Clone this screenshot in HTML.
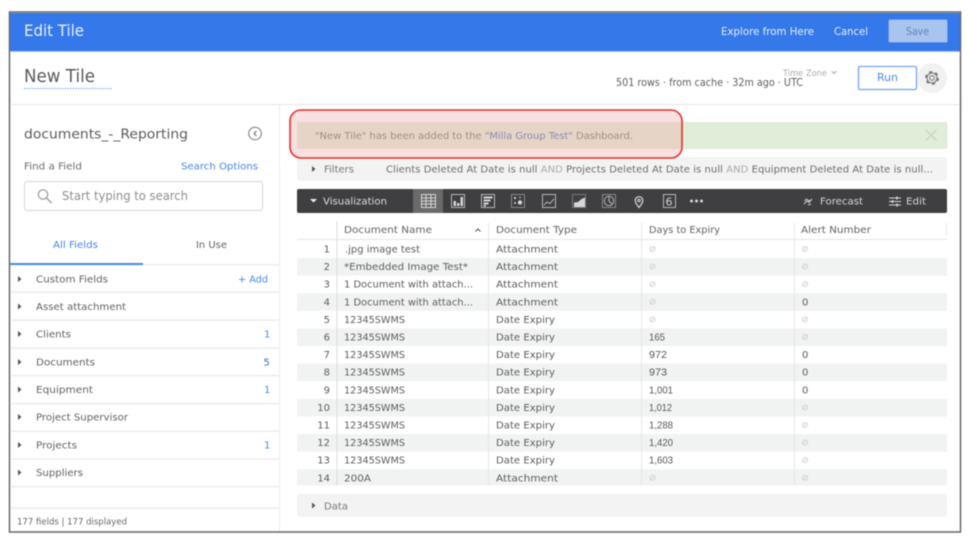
<!DOCTYPE html>
<html><head><meta charset="utf-8"><title>Edit Tile</title>
<style>
html,body{margin:0;padding:0;background:#fff;width:970px;height:542px;overflow:hidden}
svg{display:block;filter:blur(.42px)}
text{font-family:"DejaVu Sans","Liberation Sans",sans-serif;font-size:10px;fill:#5c5c5c}
.c{fill:#626262}
.b{fill:#4a86e8}
.d{font-family:"Liberation Sans","DejaVu Sans",sans-serif;font-size:10.5px;fill:#555}
</style></head><body>
<svg width="970" height="542" viewBox="0 0 970 542" xmlns="http://www.w3.org/2000/svg">
<defs>
<g id="n"><circle cx="0" cy="0" r="2.6" fill="none" stroke="#c8c8c8" stroke-width=".7"/><path d="M-2 2L2-2" stroke="#c8c8c8" stroke-width=".7"/></g>
<path id="t" d="M0-3L3.500 0L0 3Z" fill="#555"/>
</defs>
<rect width="970" height="542" fill="#fff"/>
<rect x="9.500" y="12" width="951" height="520" fill="#fff" stroke="#666" stroke-width="1.5"/>
<!-- header -->
<rect x="10" y="13" width="950" height="38" fill="#3478ea"/>
<rect x="10" y="51" width="950" height="1" fill="#a9c6f3"/>
<text x="24" y="36" style="font-size:16px;fill:#e6effd" textLength="60" lengthAdjust="spacingAndGlyphs">Edit Tile</text>
<text x="721" y="35" style="font-size:10.5px;fill:#e6effd" textLength="93" lengthAdjust="spacingAndGlyphs">Explore from Here</text>
<text x="834" y="35" style="font-size:10.5px;fill:#e6effd" textLength="34" lengthAdjust="spacingAndGlyphs">Cancel</text>
<rect x="889" y="20" width="58" height="22" rx="1" fill="#aac4f0" stroke="#9ab8ec"/>
<text x="906" y="35" style="font-size:10.5px;fill:#5f81ba" textLength="23" lengthAdjust="spacingAndGlyphs">Save</text>
<!-- sub header -->
<text x="24" y="82" style="font-size:18px;fill:#5a5a5a" textLength="71" lengthAdjust="spacingAndGlyphs">New Tile</text>
<path d="M24 88.500H113" stroke="#6fa0ee" stroke-width="1" stroke-dasharray="1.5 1.2"/>
<text x="616" y="86" style="font-size:11px;fill:#5f5f5f" textLength="187" lengthAdjust="spacingAndGlyphs">501 rows · from cache · 32m ago · UTC</text>
<text x="783" y="76" style="font-size:9px;fill:#aaa" textLength="44" lengthAdjust="spacingAndGlyphs">Time Zone</text>
<path d="M831.500 71l2.500 2.500 2.500-2.500" fill="none" stroke="#aaa" stroke-width="1"/>
<rect x="858.500" y="66.500" width="58" height="23" rx="1.5" fill="#fff" stroke="#74a3f0" stroke-width="1.3"/>
<text x="877" y="81" class="b" style="font-size:11px" textLength="21" lengthAdjust="spacingAndGlyphs">Run</text>
<circle cx="932" cy="78" r="15" fill="#f1f1f1"/>
<g fill="none" stroke="#777"><circle cx="932" cy="78" r="2.300" stroke-width="1.100"/><circle cx="932" cy="78" r="5" stroke-width="1.100"/><circle cx="932" cy="78" r="6" stroke-width="1.900" stroke-dasharray="3.140 3.140"/></g>
<rect x="10" y="104" width="950" height="1" fill="#e6e6e6"/>
<rect x="279" y="105" width="1" height="426" fill="#ececec"/>
<!-- sidebar -->
<text x="24" y="138.500" style="font-size:13.5px;fill:#5a5a5a" textLength="164" lengthAdjust="spacingAndGlyphs">documents_-_Reporting</text>
<circle cx="255" cy="133.500" r="6.300" fill="none" stroke="#777" stroke-width="1"/>
<path d="M256.500 131l-2.500 2.500 2.500 2.500" fill="none" stroke="#666" stroke-width="1"/>
<text x="24" y="169.500" style="font-size:10px;fill:#6c6c6c" textLength="58" lengthAdjust="spacingAndGlyphs">Find a Field</text>
<text x="181" y="169.500" class="b" textLength="77" lengthAdjust="spacingAndGlyphs">Search Options</text>
<rect x="24.500" y="181.500" width="238" height="29" rx="2.500" fill="#fff" stroke="#d4d4d4"/>
<circle cx="43" cy="194.500" r="4.700" fill="none" stroke="#999" stroke-width="1.2"/><path d="M46.500 198l5 5" stroke="#999" stroke-width="1.3"/>
<text x="62" y="200" style="font-size:12px;fill:#8e8e8e" textLength="126" lengthAdjust="spacingAndGlyphs">Start typing to search</text>
<text x="53" y="248" class="b" textLength="45" lengthAdjust="spacingAndGlyphs">All Fields</text>
<text x="196" y="248" class="c" textLength="31" lengthAdjust="spacingAndGlyphs">In Use</text>
<rect x="10" y="264" width="269" height="1.500" fill="#eee"/>
<rect x="10" y="263" width="133" height="2" fill="#4a86e8"/>
<g fill="#e9e9e9">
<rect x="10" y="291.500" width="269" height="1.200"/><rect x="10" y="319.500" width="269" height="1.200"/><rect x="10" y="347.500" width="269" height="1.200"/><rect x="10" y="375" width="269" height="1.200"/><rect x="10" y="403" width="269" height="1.200"/><rect x="10" y="430.500" width="269" height="1.200"/><rect x="10" y="458.500" width="269" height="1.200"/><rect x="10" y="486" width="269" height="1.200"/><rect x="10" y="507.500" width="269" height="1.200"/>
</g>
<use href="#t" x="18" y="279"/><use href="#t" x="18" y="306.500"/><use href="#t" x="18" y="334"/><use href="#t" x="18" y="362"/><use href="#t" x="18" y="389.500"/><use href="#t" x="18" y="417"/><use href="#t" x="18" y="445"/><use href="#t" x="18" y="472.500"/>
<text x="36" y="282.500" class="c" textLength="72" lengthAdjust="spacingAndGlyphs">Custom Fields</text>
<text x="36" y="310" class="c" textLength="90" lengthAdjust="spacingAndGlyphs">Asset attachment</text>
<text x="36" y="337.500" class="c" textLength="35" lengthAdjust="spacingAndGlyphs">Clients</text>
<text x="36" y="365.500" class="c" textLength="59" lengthAdjust="spacingAndGlyphs">Documents</text>
<text x="36" y="393" class="c" textLength="57" lengthAdjust="spacingAndGlyphs">Equipment</text>
<text x="36" y="420.500" class="c" textLength="92" lengthAdjust="spacingAndGlyphs">Project Supervisor</text>
<text x="36" y="448.500" class="c" textLength="41" lengthAdjust="spacingAndGlyphs">Projects</text>
<text x="36" y="476" class="c" textLength="47" lengthAdjust="spacingAndGlyphs">Suppliers</text>
<text x="238" y="282.500" class="b" textLength="30" lengthAdjust="spacingAndGlyphs">+ Add</text>
<text x="264" y="337.500" class="b">1</text>
<text x="263.500" y="365.500" class="b" style="fill:#3f6fc4">5</text>
<text x="264" y="393" class="b">1</text>
<text x="264" y="448.500" class="b">1</text>
<text x="17" y="524.500" style="font-size:9px;fill:#666" textLength="110" lengthAdjust="spacingAndGlyphs">177 fields | 177 displayed</text>
<!-- banner + filters -->
<rect x="297" y="122" width="650.500" height="27" rx="2" fill="#e0edd9"/>
<path d="M926 130l10.500 10.500M936.500 130L926 140.500" stroke="#c4cfbe" stroke-width="1.1"/>
<rect x="297" y="157" width="650" height="24" rx="3" fill="#f3f3f3"/>
<use href="#t" x="312" y="169"/>
<text x="324" y="172.500" style="fill:#777" textLength="30" lengthAdjust="spacingAndGlyphs">Filters</text>
<text x="386" y="172.500" style="fill:#6c6c6c" textLength="547" lengthAdjust="spacing">Clients Deleted At Date is null <tspan fill="#aaa">AND</tspan> Projects Deleted At Date is null <tspan fill="#aaa">AND</tspan> Equipment Deleted At Date is null...</text>
<!-- highlight -->
<rect x="290" y="110" width="392" height="48" rx="11" fill="#fadfe0"/>
<rect x="297" y="122" width="385" height="27" fill="#e6d5c6"/>
<text x="315" y="139" style="fill:#a18e82" textLength="318" lengthAdjust="spacing">"New Tile" has been added to the <tspan fill="#8a8bb0">"Milla Group Test"</tspan> Dashboard.</text>
<rect x="290" y="110" width="392" height="48" rx="11" fill="none" stroke="#e8302a" stroke-width="1.6"/>
<!-- viz bar -->
<rect x="297" y="189" width="650" height="24" rx="2" fill="#3f3f41"/>
<path d="M310 199h7l-3.500 3.500z" fill="#eee"/>
<text x="323" y="204.500" style="fill:#ddd" textLength="64" lengthAdjust="spacingAndGlyphs">Visualization</text>
<rect x="413" y="189" width="30" height="24" fill="#6a6a6a"/>
<g fill="none" stroke="#b5b5b5" stroke-width="1">
<path d="M421.500 194.500h14v13h-14zM421.500 198h14M421.500 201h14M421.500 204h14M426 194.500v13M431 194.500v13" stroke="#d4d4d4"/>
<rect x="451.500" y="194.500" width="13" height="13"/>
<rect x="481.500" y="194.500" width="13" height="13"/>
<rect x="511.500" y="194.500" width="13" height="13" stroke="#888"/>
<rect x="542.500" y="194.500" width="13" height="13"/>
<rect x="572.500" y="194.500" width="13" height="13" stroke="#777"/>
<rect x="602.500" y="194.500" width="13" height="13" stroke="#888"/>
<rect x="663.500" y="194.500" width="12" height="13"/>
<path d="M544 205l3-3 3 1.500 4-4.500"/>
<circle cx="609" cy="201" r="4.700"/><path d="M609 196.500v4.500l3 3"/>
<path d="M639 207.500c-2.500-3-3.800-5-3.800-7a3.800 3.800 0 0 1 7.600 0c0 2-1.300 4-3.800 7z" stroke="#ddd" stroke-width="1.200"/><circle cx="639" cy="200.500" r="1.200" stroke="#ddd"/>
</g>
<g fill="#d6d6d6">
<rect x="453.500" y="201" width="2.500" height="5"/><rect x="457" y="203" width="2.500" height="3"/><rect x="460.500" y="197" width="2.500" height="9"/>
<rect x="483.500" y="196.500" width="9" height="2"/><rect x="483.500" y="199.500" width="7" height="2"/><rect x="483.500" y="202.500" width="5" height="2"/><rect x="483.500" y="205" width="2.500" height="1.500"/>
<circle cx="515" cy="198" r="1.100"/><circle cx="515" cy="203" r="1"/><circle cx="520" cy="202.500" r="2.200"/><circle cx="520" cy="197.500" r=".8"/>
<path d="M574 207v-4.500l4-.5 3.500-3 3.500-1.500v9.500z"/>
<circle cx="691.500" cy="201" r="1.500"/><circle cx="696.500" cy="201" r="1.500"/><circle cx="701.500" cy="201" r="1.500"/>
</g>
<text x="665.500" y="205.500" style="font-size:11px;fill:#d8d8d8">6</text>
<path d="M804 204l3-3 2 1.500 3-3.500M804.500 201l2-2 2.500 2 2-1M808 205l3-1" fill="none" stroke="#cfcfcf" stroke-width="1"/>
<text x="820" y="204.500" style="fill:#d6d6d6" textLength="43" lengthAdjust="spacingAndGlyphs">Forecast</text>
<path d="M889 198h12M889 201.500h12M889 205h12" stroke="#d4d4d4" stroke-width="1.100"/>
<path d="M897 196.500v3M892.500 200v3M897 203.500v3" stroke="#d4d4d4" stroke-width="1.500"/>
<text x="906" y="204.500" style="fill:#d6d6d6" textLength="20" lengthAdjust="spacingAndGlyphs">Edit</text>
<!-- table header -->
<text x="344" y="233" class="c" textLength="88" lengthAdjust="spacingAndGlyphs">Document Name</text>
<path d="M475.500 231.500l2.500-2.500 2.500 2.500" fill="none" stroke="#555" stroke-width="1"/>
<text x="496" y="233" class="c" textLength="81" lengthAdjust="spacingAndGlyphs">Document Type</text>
<text x="649" y="233" class="c" textLength="71" lengthAdjust="spacingAndGlyphs">Days to Expiry</text>
<text x="801" y="233" class="c" textLength="70" lengthAdjust="spacingAndGlyphs">Alert Number</text>
<!-- stripes -->
<g fill="#f1f3f2">
<rect x="297" y="258" width="650" height="17.600"/><rect x="297" y="293.200" width="650" height="17.600"/><rect x="297" y="328.400" width="650" height="17.600"/><rect x="297" y="363.600" width="650" height="17.600"/><rect x="297" y="398.800" width="650" height="17.600"/><rect x="297" y="434" width="650" height="17.600"/><rect x="297" y="469.200" width="650" height="16.300"/>
</g>
<rect x="297" y="239" width="650" height="1" fill="#e3e3e3"/>
<g fill="#e6e6e6">
<rect x="336.500" y="221" width="1" height="264.500" fill="#dcdcdc"/>
<rect x="488" y="223" width="1" height="262.500"/>
<rect x="641" y="223" width="1" height="262.500"/>
<rect x="794" y="223" width="1" height="262.500"/>
<rect x="946" y="223" width="1" height="12"/>
</g>
<!-- row numbers -->
<g>
<text x="330" y="252.500" text-anchor="end">1</text><text x="330" y="270.100" text-anchor="end">2</text><text x="330" y="287.700" text-anchor="end">3</text><text x="330" y="305.300" text-anchor="end">4</text><text x="330" y="322.900" text-anchor="end">5</text><text x="330" y="340.500" text-anchor="end">6</text><text x="330" y="358.100" text-anchor="end">7</text><text x="330" y="375.700" text-anchor="end">8</text><text x="330" y="393.300" text-anchor="end">9</text><text x="330" y="410.900" text-anchor="end">10</text><text x="330" y="428.500" text-anchor="end">11</text><text x="330" y="446.100" text-anchor="end">12</text><text x="330" y="463.700" text-anchor="end">13</text><text x="330" y="481.300" text-anchor="end">14</text>
</g>
<!-- col 1 -->
<text x="345" y="252.500" textLength="75" lengthAdjust="spacingAndGlyphs">.jpg image test</text>
<text x="344" y="270.100" textLength="124" lengthAdjust="spacingAndGlyphs">*Embedded Image Test*</text>
<text x="344" y="287.700" textLength="129" lengthAdjust="spacingAndGlyphs">1 Document with attach...</text>
<text x="344" y="305.300" textLength="129" lengthAdjust="spacingAndGlyphs">1 Document with attach...</text>
<text x="344" y="322.900" textLength="61" lengthAdjust="spacingAndGlyphs">12345SWMS</text>
<text x="344" y="340.500" textLength="61" lengthAdjust="spacingAndGlyphs">12345SWMS</text>
<text x="344" y="358.100" textLength="61" lengthAdjust="spacingAndGlyphs">12345SWMS</text>
<text x="344" y="375.700" textLength="61" lengthAdjust="spacingAndGlyphs">12345SWMS</text>
<text x="344" y="393.300" textLength="61" lengthAdjust="spacingAndGlyphs">12345SWMS</text>
<text x="344" y="410.900" textLength="61" lengthAdjust="spacingAndGlyphs">12345SWMS</text>
<text x="344" y="428.500" textLength="61" lengthAdjust="spacingAndGlyphs">12345SWMS</text>
<text x="344" y="446.100" textLength="61" lengthAdjust="spacingAndGlyphs">12345SWMS</text>
<text x="344" y="463.700" textLength="61" lengthAdjust="spacingAndGlyphs">12345SWMS</text>
<text x="344" y="481.300" textLength="27" lengthAdjust="spacingAndGlyphs">200A</text>
<!-- col 2 -->
<text x="496" y="252.500" textLength="62" lengthAdjust="spacingAndGlyphs">Attachment</text>
<text x="496" y="270.100" textLength="62" lengthAdjust="spacingAndGlyphs">Attachment</text>
<text x="496" y="287.700" textLength="62" lengthAdjust="spacingAndGlyphs">Attachment</text>
<text x="496" y="305.300" textLength="62" lengthAdjust="spacingAndGlyphs">Attachment</text>
<text x="496" y="322.900" textLength="59" lengthAdjust="spacingAndGlyphs">Date Expiry</text>
<text x="496" y="340.500" textLength="59" lengthAdjust="spacingAndGlyphs">Date Expiry</text>
<text x="496" y="358.100" textLength="59" lengthAdjust="spacingAndGlyphs">Date Expiry</text>
<text x="496" y="375.700" textLength="59" lengthAdjust="spacingAndGlyphs">Date Expiry</text>
<text x="496" y="393.300" textLength="59" lengthAdjust="spacingAndGlyphs">Date Expiry</text>
<text x="496" y="410.900" textLength="59" lengthAdjust="spacingAndGlyphs">Date Expiry</text>
<text x="496" y="428.500" textLength="59" lengthAdjust="spacingAndGlyphs">Date Expiry</text>
<text x="496" y="446.100" textLength="59" lengthAdjust="spacingAndGlyphs">Date Expiry</text>
<text x="496" y="463.700" textLength="59" lengthAdjust="spacingAndGlyphs">Date Expiry</text>
<text x="496" y="481.300" textLength="62" lengthAdjust="spacingAndGlyphs">Attachment</text>
<!-- col 3 -->
<use href="#n" x="652.500" y="249"/><use href="#n" x="652.500" y="266.600"/><use href="#n" x="652.500" y="284.200"/><use href="#n" x="652.500" y="301.800"/><use href="#n" x="652.500" y="319.400"/><use href="#n" x="652.500" y="477.800"/>
<text class="d" x="649" y="340.500" textLength="16" lengthAdjust="spacingAndGlyphs">165</text>
<text class="d" x="649" y="358.100" textLength="18" lengthAdjust="spacingAndGlyphs">972</text>
<text class="d" x="649" y="375.700" textLength="18" lengthAdjust="spacingAndGlyphs">973</text>
<text class="d" x="649" y="393.300" textLength="24" lengthAdjust="spacingAndGlyphs">1,001</text>
<text class="d" x="649" y="410.900" textLength="23" lengthAdjust="spacingAndGlyphs">1,012</text>
<text class="d" x="649" y="428.500" textLength="24" lengthAdjust="spacingAndGlyphs">1,288</text>
<text class="d" x="649" y="446.100" textLength="24" lengthAdjust="spacingAndGlyphs">1,420</text>
<text class="d" x="649" y="463.700" textLength="24" lengthAdjust="spacingAndGlyphs">1,603</text>
<!-- col 4 -->
<use href="#n" x="805" y="249"/><use href="#n" x="805" y="266.600"/><use href="#n" x="805" y="284.200"/><use href="#n" x="805" y="319.400"/><use href="#n" x="805" y="337"/><use href="#n" x="805" y="407.400"/><use href="#n" x="805" y="425"/><use href="#n" x="805" y="442.600"/><use href="#n" x="805" y="460.200"/><use href="#n" x="805" y="477.800"/>
<text x="802" y="305.300">0</text><text x="802" y="358.100">0</text><text x="802" y="375.700">0</text><text x="802" y="393.300">0</text>
<!-- data -->
<rect x="297" y="494" width="650" height="23" rx="3" fill="#f3f3f3"/>
<use href="#t" x="312" y="505.500"/>
<text x="324" y="509.500" style="fill:#777" textLength="24" lengthAdjust="spacingAndGlyphs">Data</text>
</svg>
</body></html>
